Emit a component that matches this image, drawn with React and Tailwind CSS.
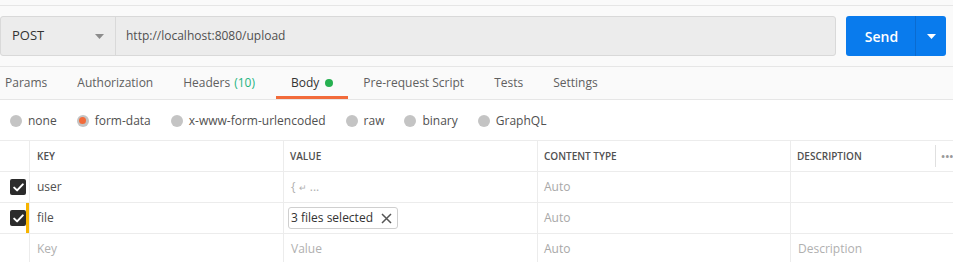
const tabs = [
  { label: "Params" },
  { label: "Authorization" },
  { label: "Headers", count: "(10)" },
  { label: "Body", dot: true, active: true },
  { label: "Pre-request Script" },
  { label: "Tests" },
  { label: "Settings" },
];

const bodyTypes = [
  { label: "none" },
  { label: "form-data", selected: true },
  { label: "x-www-form-urlencoded" },
  { label: "raw" },
  { label: "binary" },
  { label: "GraphQL" },
];

const Check = () => (
  <span className="flex h-[16px] w-[16px] items-center justify-center rounded-[2px] bg-[#2b2b2b]">
    <svg width="11" height="9" viewBox="0 0 11 9" fill="none">
      <path d="M1.2 4.6 L4.1 7.4 L9.8 1.4" stroke="#fff" strokeWidth="2" strokeLinecap="round" strokeLinejoin="round" />
    </svg>
  </span>
);

const Caret = ({ color }) => (
  <svg width="9" height="5" viewBox="0 0 9 5">
    <path d="M0 0 H9 L4.5 5 Z" fill={color} />
  </svg>
);

const Row = ({ checked, marker, keyCell, valueCell, typeCell, descCell }) => (
  <div className="flex h-[31px] border-b border-[#ececec]">
    <div className="flex w-[30px] items-center justify-between border-r border-[#ececec] pl-[10px]">
      {checked ? <Check /> : <span />}
      {marker ? <span className="h-full w-[3px] bg-[#f7b400]" /> : null}
    </div>
    <div className="flex w-[254px] items-center border-r border-[#ececec] pl-[7px]">{keyCell}</div>
    <div className="flex w-[254px] items-center border-r border-[#ececec] pl-[4px]">{valueCell}</div>
    <div className="flex w-[253px] items-center border-r border-[#ececec] pl-[6px]">{typeCell}</div>
    <div className="flex flex-1 items-center pl-[7px]">{descCell}</div>
  </div>
);

const App = () => {
  return (
    <div className="h-[262px] w-[953px] overflow-hidden bg-white text-[12px] text-[#505050]" style={{ fontFamily: '"Open Sans", "Noto Sans", sans-serif' }}>
      <div className="bg-[#fafafa]">
        <div className="box-border h-[6px] border-b border-[#e6e6e6]" />
        <div className="flex h-[60px] items-start pt-[10px]">
          <div className="flex h-[40px] flex-1 rounded-[3px] border border-[#d9d9d9] bg-[#ececec]">
            <div className="flex w-[115px] items-center justify-between border-r border-[#d9d9d9] pl-[11px] pr-[11px] text-[13px] text-[#333]">
              <span>POST</span>
              <Caret color="#8c8c8c" />
            </div>
            <div className="flex items-center pl-[10px] text-[#505050]">http://localhost:8080/upload</div>
          </div>
          <div className="ml-[10px] mr-[7px] flex h-[40px] w-[100px] rounded-[3px] bg-[#097bed] text-white">
            <div className="flex w-[69px] items-center justify-center pl-[2px] text-[14px] font-semibold">Send</div>
            <div className="flex flex-1 items-center justify-center border-l border-[#0a6bd0]">
              <Caret color="#fff" />
            </div>
          </div>
        </div>
        <div className="box-border flex h-[34px] border-y border-[#e6e6e6]">
          <div className="-ml-[10px] flex">
            {tabs.map((t) => (
              <div
                key={t.label}
                className={
                  "flex items-center border-b-[3px] px-[15px] pt-[3px] " +
                  (t.count ? "mr-[6px] " : "") +
                  (t.active ? "border-[#f26b3a] text-[#333]" : "border-transparent text-[#606060]")
                }
              >
                <span>{t.label}</span>
                {t.count ? <span className="ml-[4px] text-[#26b47f]">{t.count}</span> : null}
                {t.dot ? <span className="ml-[6px] h-[8px] w-[8px] rounded-full bg-[#26b050]" /> : null}
              </div>
            ))}
          </div>
        </div>
      </div>

      <div className="flex h-[40px] items-center pl-[10px] pt-[1px]">
        {bodyTypes.map((b) => (
          <div key={b.label} className="mr-[20px] flex items-center">
            <span className="flex h-[12px] w-[12px] items-center justify-center rounded-full bg-[#c4c4c4]">
              {b.selected ? <span className="h-[7px] w-[7px] rounded-full bg-[#f26b3a]" /> : null}
            </span>
            <span className="ml-[6px] text-[#505050]">{b.label}</span>
          </div>
        ))}
      </div>

      <div className="border-t border-[#ececec]">
        <div className="flex h-[31px] border-b border-[#ececec] text-[10px] font-semibold text-[#505050]">
          <div className="w-[30px] border-r border-[#ececec]" />
          <div className="flex w-[254px] items-center border-r border-[#ececec] pl-[7px]">KEY</div>
          <div className="flex w-[254px] items-center border-r border-[#ececec] pl-[6px]">VALUE</div>
          <div className="flex w-[253px] items-center border-r border-[#ececec] pl-[6px]">CONTENT TYPE</div>
          <div className="flex flex-1 items-center overflow-hidden">
            <span className="w-[144px] shrink-0 pl-[6px]">DESCRIPTION</span>
            <span className="h-[22px] border-l border-[#e0e0e0]" />
            <span className="ml-[5px] text-[11px] leading-none text-[#999]">•••</span>
          </div>
        </div>
        <Row
          checked
          keyCell={<span className="text-[#505050]">user</span>}
          valueCell={
            <span className="pl-[3px] text-[#b0b0b0]">
              {"{ "}
              <span className="text-[9px]">↵</span>
              {" ..."}
            </span>
          }
          typeCell={<span className="text-[#a8a8a8]">Auto</span>}
          descCell={null}
        />
        <Row
          checked
          marker
          keyCell={<span className="text-[#505050]">file</span>}
          valueCell={
            <span className="flex h-[22px] items-center rounded-[3px] border border-[#cfcfcf] bg-white pl-[2px] pr-[5px] text-[#333]">
              3 files selected
              <svg className="ml-[8px]" width="11" height="11" viewBox="0 0 11 11">
                <path d="M1 1 L10 10 M10 1 L1 10" stroke="#555" strokeWidth="1.5" />
              </svg>
            </span>
          }
          typeCell={<span className="text-[#a8a8a8]">Auto</span>}
          descCell={null}
        />
        <Row
          keyCell={<span className="text-[#b0b0b0]">Key</span>}
          valueCell={<span className="pl-[3px] text-[#b0b0b0]">Value</span>}
          typeCell={<span className="text-[#a8a8a8]">Auto</span>}
          descCell={<span className="text-[#b0b0b0]">Description</span>}
        />
      </div>
    </div>
  );
};

export default App;
